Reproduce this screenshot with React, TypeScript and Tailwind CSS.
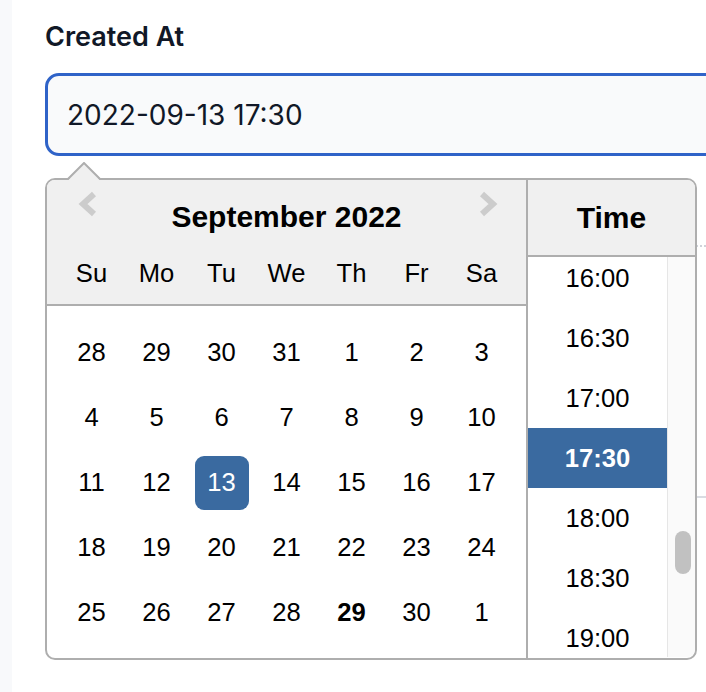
import React from "react";

const weeks: string[][] = [
  ["28", "29", "30", "31", "1", "2", "3"],
  ["4", "5", "6", "7", "8", "9", "10"],
  ["11", "12", "13", "14", "15", "16", "17"],
  ["18", "19", "20", "21", "22", "23", "24"],
  ["25", "26", "27", "28", "29", "30", "1"],
];
const dayNames = ["Su", "Mo", "Tu", "We", "Th", "Fr", "Sa"];
const times = ["16:00", "16:30", "17:00", "17:30", "18:00", "18:30", "19:00"];

export default function App() {
  return (
    <div className="w-[706px] h-[692px] overflow-hidden flex bg-white">
      <div className="w-[12px] shrink-0 bg-[#f8f9fb]" />
      <div className="flex-1 pl-[33px] pt-[19px] flex flex-col">
        <div className="text-[27px] leading-[36px] font-semibold text-[#111827] font-['Inter',sans-serif] mb-[18px]">
          Created At
        </div>
        <div className="relative w-[720px] shrink-0">
          <div className="h-[83px] border-[3px] border-[#2f63c8] rounded-[14px] bg-[#f9fafb] pl-[19px] flex items-center text-[28px] text-[#111827] font-['Inter',sans-serif]">
            2022-09-13 17:30
          </div>

          <div className="absolute top-[105px] left-0 z-10 w-[652px] border-2 border-[#aeaeae] rounded-[10px] bg-white flex font-['Liberation_Sans',Arial,sans-serif] text-black">
            <svg
              className="absolute -top-[18px] left-[20px]"
              width="34"
              height="19"
              viewBox="0 0 34 19"
            >
              <polygon points="0,19 17,2 34,19" fill="#f0f0f0" />
              <polyline points="0,18 17,1 34,18" fill="none" stroke="#aeaeae" strokeWidth="2" />
            </svg>

            {/* Month */}
            <div className="w-[479px] shrink-0 flex flex-col">
              <div className="relative h-[126px] bg-[#f0f0f0] border-b-2 border-[#aeaeae] rounded-tl-[8px] pt-[19px] flex flex-col">
                <svg className="absolute left-[30px] top-[11px]" width="20" height="26" viewBox="0 0 20 26">
                  <polyline points="17,3 6,13 17,23" fill="none" stroke="#cccccc" strokeWidth="6" />
                </svg>
                <svg className="absolute right-[27px] top-[11px]" width="20" height="26" viewBox="0 0 20 26">
                  <polyline points="3,3 14,13 3,23" fill="none" stroke="#cccccc" strokeWidth="6" />
                </svg>
                <div className="text-center text-[30px] leading-[36px] font-bold">September 2022</div>
                <div className="grid grid-cols-7 px-[12px] mt-[11px]">
                  {dayNames.map((d) => (
                    <div key={d} className="h-[54px] flex items-center justify-center text-[25.6px]">
                      {d}
                    </div>
                  ))}
                </div>
              </div>
              <div className="px-[12px] pt-[14px] pb-[13px] flex flex-col">
                {weeks.map((w, wi) => (
                  <div key={wi} className="grid grid-cols-7 h-[65px]">
                    {w.map((d, di) => {
                      const selected = wi === 2 && di === 2;
                      const today = wi === 4 && di === 4;
                      return (
                        <div key={di} className="flex items-center justify-center">
                          <div
                            className={
                              selected
                                ? "w-[54px] h-[54px] rounded-[9px] bg-[#3a6aa0] text-white flex items-center justify-center text-[25.6px]"
                                : today
                                ? "w-[54px] h-[54px] flex items-center justify-center text-[25.6px] font-bold"
                                : "w-[54px] h-[54px] flex items-center justify-center text-[25.6px]"
                            }
                          >
                            {d}
                          </div>
                        </div>
                      );
                    })}
                  </div>
                ))}
              </div>
            </div>

            {/* Time */}
            <div className="w-[169px] shrink-0 border-l-2 border-[#aeaeae] flex flex-col">
              <div className="h-[77px] bg-[#f0f0f0] border-b-2 border-[#aeaeae] rounded-tr-[8px] flex items-center justify-center text-[30px] font-bold">
                Time
              </div>
              <div className="h-[400px] flex overflow-hidden rounded-br-[8px]">
                <div className="flex-1 overflow-hidden">
                  <div className="-mt-[9px] flex flex-col">
                    {times.map((t) => (
                      <div
                        key={t}
                        className={
                          t === "17:30"
                            ? "h-[60px] shrink-0 flex items-center justify-center text-[25.6px] bg-[#3a6aa0] text-white font-bold"
                            : "h-[60px] shrink-0 flex items-center justify-center text-[25.6px]"
                        }
                      >
                        {t}
                      </div>
                    ))}
                  </div>
                </div>
                <div className="w-[28px] shrink-0 bg-[#fafafa] border-l border-[#e6e6e6] pt-[274px] pl-[7px]">
                  <div className="w-[16px] h-[43px] rounded-full bg-[#c1c1c1]" />
                </div>
              </div>
            </div>
          </div>
        </div>
        <div className="mt-[89px] w-[700px] border-t-2 border-dotted border-[#cfd3da]" />
        <div className="mt-[249px] w-[700px] border-t-2 border-[#d9dce2]" />
      </div>
    </div>
  );
}
